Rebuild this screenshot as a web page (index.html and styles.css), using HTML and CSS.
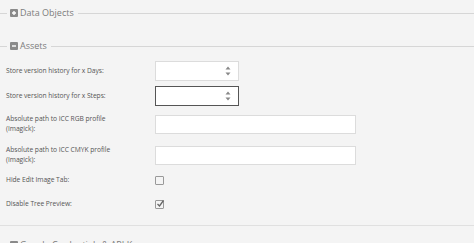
FILE: index.html
```html
<!DOCTYPE html>
<html lang="en">
<head>
    <meta charset="UTF-8">
    <title>System Settings</title>
    <link rel="stylesheet" href="styles.css">
</head>
<body>
    <div class="section collapsed">
        <div class="section-head">
            <span class="toggle">
                <svg width="8" height="8" viewBox="0 0 8 8"><rect width="8" height="8" rx="1" fill="#8a8a8a"/><path d="M2 4h4M4 2v4" stroke="#fff" stroke-width="1.4"/></svg>
            </span>
            <span class="title">Data Objects</span>
        </div>
    </div>

    <div class="section open">
        <div class="section-head">
            <span class="toggle">
                <svg width="8" height="8" viewBox="0 0 8 8"><rect width="8" height="8" rx="1" fill="#8a8a8a"/><path d="M2 4h4" stroke="#fff" stroke-width="1.4"/></svg>
            </span>
            <span class="title">Assets</span>
        </div>

        <div class="field row-days">
            <label>Store version history for x Days:</label>
            <div class="spinner">
                <span class="arrows">
                    <svg width="6" height="12" viewBox="0 0 6 12"><path d="M3 1.5L5.5 4.5H0.5z M3 10.5L5.5 7.5H0.5z" fill="#888"/></svg>
                </span>
            </div>
        </div>

        <div class="field row-steps">
            <label>Store version history for x Steps:</label>
            <div class="spinner focused">
                <span class="arrows">
                    <svg width="6" height="12" viewBox="0 0 6 12"><path d="M3 1.5L5.5 4.5H0.5z M3 10.5L5.5 7.5H0.5z" fill="#888"/></svg>
                </span>
            </div>
        </div>

        <div class="field row-rgb">
            <label>Absolute path to ICC RGB profile<br>(Imagick):</label>
            <div class="textbox"></div>
        </div>

        <div class="field row-cmyk">
            <label>Absolute path to ICC CMYK profile<br>(Imagick):</label>
            <div class="textbox"></div>
        </div>

        <div class="field row-check">
            <label>Hide Edit Image Tab:</label>
            <span class="check"></span>
        </div>

        <div class="field row-check last">
            <label>Disable Tree Preview:</label>
            <span class="check">
                <svg width="8" height="8" viewBox="0 0 8 8"><path d="M1.5 4l2 2 4-5.5" stroke="#666" stroke-width="1.3" fill="none"/></svg>
            </span>
        </div>
    </div>

    <div class="section collapsed">
        <div class="section-head">
            <span class="toggle">
                <svg width="8" height="8" viewBox="0 0 8 8"><rect width="8" height="8" rx="1" fill="#8a8a8a"/><path d="M2 4h4M4 2v4" stroke="#fff" stroke-width="1.4"/></svg>
            </span>
            <span class="title">Google Credentials &amp; API Keys</span>
        </div>
    </div>
</body>
</html>
```

FILE: styles.css
```css
body {
    margin: 0;
    background-color: #f4f4f4;
    font-family: 'Open Sans', sans-serif;
    color: #555;
    overflow: hidden;
}

.section-head {
    display: flex;
    align-items: center;
    height: 10px;
}

.section-head::before {
    content: "";
    width: 7px;
    border-top: 1px solid #d6d6d6;
    margin-right: 3px;
}

.section-head::after {
    content: "";
    flex: 1;
    border-top: 1px solid #d6d6d6;
    margin-left: 4px;
}

.toggle {
    display: flex;
    width: 8px;
    height: 8px;
}

.title {
    font-size: 9px;
    color: #7c7c7c;
    margin-left: 2px;
    line-height: 10px;
}

.collapsed {
    padding-top: 8px;
}

.section.open {
    margin-top: 23px;
    padding-bottom: 13px;
    border-bottom: 1px solid #e0e0e0;
}

.section.open + .collapsed {
    padding-top: 14px;
}

.field {
    display: flex;
    align-items: center;
    padding-left: 6px;
}

.field label {
    width: 149px;
    font-size: 6.7px;
    letter-spacing: -0.04px;
    line-height: 10px;
    color: #555;
}

.row-days {
    margin-top: 10px;
}

.row-steps {
    margin-top: 5px;
}

.row-rgb {
    margin-top: 8px;
}

.row-cmyk {
    margin-top: 11px;
}

.row-check {
    height: 16px;
    margin-top: 8px;
}

.row-cmyk + .row-check {
    margin-top: 7px;
}

.spinner {
    width: 82px;
    height: 18px;
    background-color: #fff;
    border: 1px solid #dcdcdc;
    display: flex;
    justify-content: flex-end;
    align-items: center;
}

.spinner.focused {
    border-color: #555;
}

.arrows {
    display: flex;
    margin-right: 7px;
}

.textbox {
    width: 199px;
    height: 17px;
    background-color: #fff;
    border: 1px solid #dcdcdc;
}

.check {
    width: 7px;
    height: 7px;
    border: 1px solid #999;
    border-radius: 1px;
    display: flex;
    align-items: center;
    justify-content: center;
}

.check svg {
    margin-top: -1px;
    margin-right: -1px;
}
```
